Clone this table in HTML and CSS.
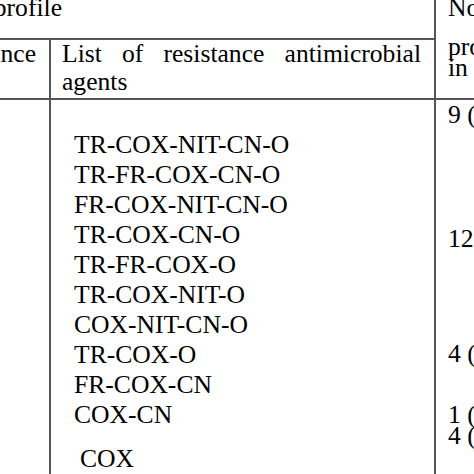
FILE: index.html
```html
<!DOCTYPE html>
<html lang="en">
<head>
<meta charset="utf-8">
<title>Resistance profiles</title>
<link rel="stylesheet" href="styles.css">
</head>
<body>
<div class="sheet">
  <div class="grid">
    <div class="cell title"><span class="title-text">Antimicrobial resistance profile</span></div>
    <div class="cell count-head">
      <div class="l1">No. (%) of isolates</div>
      <div class="l2">profile types</div>
      <div class="l3">in each group</div>
    </div>
    <div class="cell res-head">Resistance</div>
    <div class="cell list-head">List of resistance antimicrobial agents</div>

    <div class="cell res-body"></div>
    <div class="cell list-body">
      <div class="line">TR-COX-NIT-CN-O</div>
      <div class="line">TR-FR-COX-CN-O</div>
      <div class="line">FR-COX-NIT-CN-O</div>
      <div class="line">TR-COX-CN-O</div>
      <div class="line">TR-FR-COX-O</div>
      <div class="line">TR-COX-NIT-O</div>
      <div class="line">COX-NIT-CN-O</div>
      <div class="line">TR-COX-O</div>
      <div class="line">FR-COX-CN</div>
      <div class="line">COX-CN</div>
      <div class="line last">COX</div>
    </div>
    <div class="cell count-body">
      <div class="val v1">9 (25.7)</div>
      <div class="val v2">12 (34.3)</div>
      <div class="val v3">4 (11.4)</div>
      <div class="val v4">1 (2.9)</div>
      <div class="val v5">4 (11.4)</div>
    </div>
  </div>
</div>
</body>
</html>
```

FILE: styles.css
```css
html, body {
  margin: 0;
  padding: 0;
  background: #ffffff;
}
body {
  width: 474px;
  height: 474px;
  overflow: hidden;
  font-family: "Liberation Serif", "Times New Roman", serif;
  font-size: 25.6px;
  color: #000000;
}
.sheet {
  margin: -10px 0 0 -148px;
}
.grid {
  display: grid;
  grid-template-columns: 199px 385px 220px;
  grid-template-rows: auto auto auto;
}
.cell {
  box-sizing: border-box;
  line-height: 28px;
}
.title {
  grid-column: 1 / 3;
  grid-row: 1;
  display: flex;
  justify-content: flex-end;
  padding: 4px 372px 16px 0;
  border-right: 2px solid #555;
  border-bottom: 2px solid #555;
  white-space: nowrap;
}
.title-text {
  flex: none;
}
.count-head {
  grid-column: 3;
  grid-row: 1 / 3;
  padding: 4px 0 0 12px;
  border-bottom: 2px solid #555;
  white-space: nowrap;
}
.count-head .l2 {
  margin-top: 11px;
}
.count-head .l3 {
  margin-top: -7px;
}
.res-head {
  grid-column: 1;
  grid-row: 2;
  text-align: right;
  padding: 0 13px 2px 0;
  border-right: 2px solid #555;
  border-bottom: 2px solid #555;
}
.list-head {
  grid-column: 2;
  grid-row: 2;
  text-align: justify;
  padding: 0 13px 2px 11px;
  border-right: 2px solid #555;
  border-bottom: 2px solid #555;
}
.res-body {
  grid-column: 1;
  grid-row: 3;
  border-right: 2px solid #555;
}
.list-body {
  grid-column: 2;
  grid-row: 3;
  padding: 30px 0 20px 23px;
  border-right: 2px solid #555;
  white-space: nowrap;
}
.list-body .line {
  line-height: 30px;
}
.list-body .last {
  margin-top: 14px;
  padding-left: 6px;
}
.count-body {
  grid-column: 3;
  grid-row: 3;
  padding: 4px 0 0 12px;
  white-space: nowrap;
}
.val {
  line-height: 21px;
}
.v2 { margin-top: 103px; }
.v3 { margin-top: 94px; }
.v4 { margin-top: 40px; }
```
